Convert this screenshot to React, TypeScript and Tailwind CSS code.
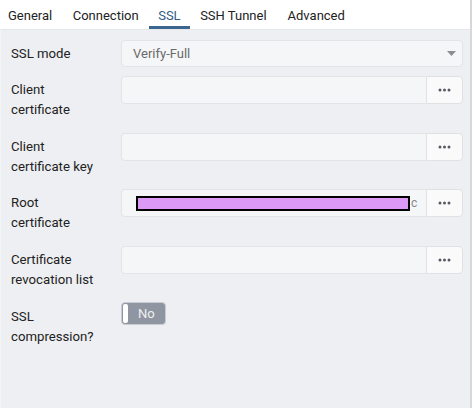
const tabs = ['General', 'Connection', 'SSL', 'SSH Tunnel', 'Advanced'];

const Dots = () => (
  <svg width="13" height="4" viewBox="0 0 13 4" className="fill-[#555a60]">
    <circle cx="2" cy="2" r="1.5" />
    <circle cx="6.5" cy="2" r="1.5" />
    <circle cx="11" cy="2" r="1.5" />
  </svg>
);

const FileInput = ({ children }: { children?: React.ReactNode }) => (
  <div className="flex h-[28px] w-[342px]">
    <div className="flex flex-1 items-center rounded-l-[4px] border border-r-0 border-[#e3e4e8] bg-[#f5f6f8] pl-[13px] text-[13px] text-[#555]">
      {children}
    </div>
    <button className="flex w-[37px] items-center justify-center rounded-r-[4px] border border-[#e0e1e5] bg-[#fafafb]">
      <Dots />
    </button>
  </div>
);

const Row = ({ label, h, pt = 'pt-[4px]', children }: { label: string[]; h: string; pt?: string; children: React.ReactNode }) => (
  <div className={`flex items-start ${h}`}>
    <div className={`w-[110px] shrink-0 text-[13.2px] leading-[20px] text-[#222] ${pt}`}>
      {label.map((l) => (
        <div key={l}>{l}</div>
      ))}
    </div>
    {children}
  </div>
);

export default function App() {
  return (
    <div className="h-[411px] w-[474px] bg-white font-['Roboto',sans-serif]">
      <div className="flex h-[408px] w-[472px] flex-col border-r-2 border-[#d6d7db]">
        <div className="flex h-[30px] shrink-0 border-b border-[#e6e7ea] bg-white">
          {tabs.map((t, i) => (
            <div
              key={t}
              className={
                t === 'SSL'
                  ? 'flex items-center border-b-[3px] border-[#3a6690] px-[9px] pt-[5px] text-[13px] text-[#2f5c86]'
                  : `flex items-center pt-[2px] text-[13px] text-[#222] ${i === 0 ? 'pl-[8px] pr-[10px]' : 'px-[10.5px]'}`
              }
            >
              {t}
            </div>
          ))}
        </div>
        <div className="flex-1 border-l border-[#f5f5f7] bg-[#eeeff2] pl-[10px] pr-[7px] pt-[10px]">
          <Row label={['SSL mode']} h="h-[36px]">
            <div className="flex h-[27px] w-[342px] items-center justify-between rounded-[4px] border border-[#e3e4e8] bg-[#f5f6f8] pl-[11px] pr-[6px] text-[13px] text-[#6a6a6a]">
              <span>Verify-Full</span>
              <svg width="9" height="5" viewBox="0 0 9 5" className="fill-[#8a8d92]">
                <path d="M0 0h9L4.5 5z" />
              </svg>
            </div>
          </Row>
          <Row label={['Client', 'certificate']} h="h-[57px]">
            <FileInput />
          </Row>
          <Row label={['Client', 'certificate key']} h="h-[56px]">
            <FileInput />
          </Row>
          <Row label={['Root', 'certificate']} h="h-[57px]">
            <FileInput>
              <span className="ml-[1px] h-[15px] w-[274px] border-2 border-black bg-[#dc9af6]" />
              <span className="ml-[1px] text-[12px] text-[#888]">c</span>
            </FileInput>
          </Row>
          <Row label={['Certificate', 'revocation list']} h="h-[56px]">
            <FileInput />
          </Row>
          <Row label={['SSL', 'compression?']} h="h-[56px]" pt="pt-[5px]">
            <div className="flex h-[23px] w-[45px] items-center rounded-[4px] border border-[#c8ccd2] bg-[#8f96a2] pl-[1px]">
              <div className="h-[19px] w-[5px] rounded-[2px] bg-white" />
              <span className="ml-[10px] text-[13px] text-[#eef0f4]">No</span>
            </div>
          </Row>
        </div>
      </div>
    </div>
  );
}
